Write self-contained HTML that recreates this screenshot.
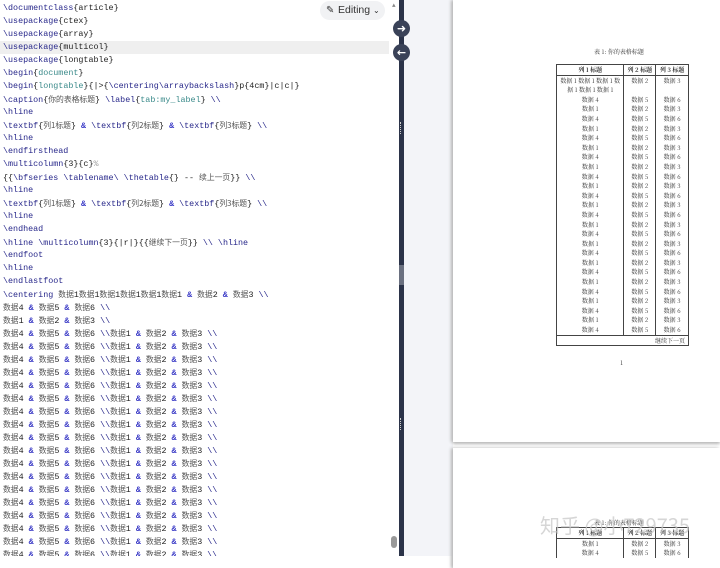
<!DOCTYPE html>
<html><head><meta charset="utf-8">
<style>
*{margin:0;padding:0;box-sizing:border-box}
body{width:720px;height:556px;overflow:hidden;background:#fff;position:relative;font-family:"Liberation Mono","Noto Sans CJK SC",monospace}
#ed{position:absolute;left:0;top:0;width:399px;height:556px;background:#fff;overflow:hidden}
.l{position:absolute;left:3px;height:13px;line-height:13px;font-size:8.4px;color:#222;white-space:pre}
.k{color:#27278a}
.e{color:#3a8a8a}
.a{color:#3333c4;font-weight:bold}
.c{font-family:"Noto Sans CJK SC",sans-serif;font-size:7.8px;color:#555}
#hl{position:absolute;left:0;top:41px;width:389px;height:13px;background:#efefef}
#btn{position:absolute;left:320px;top:1px;width:65px;height:19px;border-radius:10px;background:#f1f2f4;font-family:"Liberation Sans",sans-serif;font-size:10.5px;color:#333;line-height:19px;padding-left:18px}
#bar{position:absolute;left:399px;top:0;width:5px;height:556px;background:#2b3349}
#grey{position:absolute;left:404px;top:0;width:49px;height:556px;background:#f3f4f8}
.circ{position:absolute;left:393px;width:17px;height:17px;border-radius:50%;background:#3a4258;color:#fff;font:bold 11px "DejaVu Sans",sans-serif;text-align:center;line-height:17px}
.pg{position:absolute;left:453px;width:267px;background:#fff;box-shadow:-2px 0 3px #bbb,0 2px 3px #bbb;overflow:hidden}
table{position:absolute;border-collapse:collapse;font-family:"Noto Serif CJK SC",serif;font-size:6px;color:#333}
td{border-left:1px solid #444;border-right:1px solid #444;padding:0;text-align:center;height:9.6px;line-height:9.6px}
.cap{position:absolute;font-family:"Noto Serif CJK SC",serif;font-size:6px;color:#333}
</style></head><body>
<div id="ed">
<div id="hl"></div>
<div class="l" style="top:2px"><span class="k">\documentclass</span>{article}</div>
<div class="l" style="top:15px"><span class="k">\usepackage</span>{ctex}</div>
<div class="l" style="top:28px"><span class="k">\usepackage</span>{array}</div>
<div class="l" style="top:41px"><span class="k">\usepackage</span>{multicol}</div>
<div class="l" style="top:54px"><span class="k">\usepackage</span>{longtable}</div>
<div class="l" style="top:67px"><span class="k">\begin</span>{<span class="e">document</span>}</div>
<div class="l" style="top:80px"><span class="k">\begin</span>{<span class="e">longtable</span>}{|&gt;{<span class="k">\centering\arraybackslash</span>}p{4cm}|c|c|}</div>
<div class="l" style="top:93px"><span class="k">\caption</span>{<span class="c">你的表格标题</span>} <span class="k">\label</span>{<span class="e">tab:my_label</span>} <span class="k">\\</span></div>
<div class="l" style="top:106px"><span class="k">\hline</span></div>
<div class="l" style="top:119px"><span class="k">\textbf</span>{<span class="c">列1标题</span>} <span class="a">&amp;</span> <span class="k">\textbf</span>{<span class="c">列2标题</span>} <span class="a">&amp;</span> <span class="k">\textbf</span>{<span class="c">列3标题</span>} <span class="k">\\</span></div>
<div class="l" style="top:132px"><span class="k">\hline</span></div>
<div class="l" style="top:145px"><span class="k">\endfirsthead</span></div>
<div class="l" style="top:158px"><span class="k">\multicolumn</span>{3}{c}<span style="color:#999">%</span></div>
<div class="l" style="top:171px">{{<span class="k">\bfseries</span> <span class="k">\tablename\</span> <span class="k">\thetable</span>{} -- <span class="c">续上一页</span>}} <span class="k">\\</span></div>
<div class="l" style="top:184px"><span class="k">\hline</span></div>
<div class="l" style="top:197px"><span class="k">\textbf</span>{<span class="c">列1标题</span>} <span class="a">&amp;</span> <span class="k">\textbf</span>{<span class="c">列2标题</span>} <span class="a">&amp;</span> <span class="k">\textbf</span>{<span class="c">列3标题</span>} <span class="k">\\</span></div>
<div class="l" style="top:210px"><span class="k">\hline</span></div>
<div class="l" style="top:223px"><span class="k">\endhead</span></div>
<div class="l" style="top:236px"><span class="k">\hline</span> <span class="k">\multicolumn</span>{3}{|r|}{{<span class="c">继续下一页</span>}} <span class="k">\\</span> <span class="k">\hline</span></div>
<div class="l" style="top:249px"><span class="k">\endfoot</span></div>
<div class="l" style="top:262px"><span class="k">\hline</span></div>
<div class="l" style="top:275px"><span class="k">\endlastfoot</span></div>
<div class="l" style="top:288px"><span class="k">\centering</span> <span class="c">数据</span>1<span class="c">数据</span>1<span class="c">数据</span>1<span class="c">数据</span>1<span class="c">数据</span>1<span class="c">数据</span>1 <span class="a">&amp;</span> <span class="c">数据</span>2 <span class="a">&amp;</span> <span class="c">数据</span>3 <span class="k">\\</span></div>
<div class="l" style="top:301px"><span class="c">数据</span>4 <span class="a">&amp;</span> <span class="c">数据</span>5 <span class="a">&amp;</span> <span class="c">数据</span>6 <span class="k">\\</span></div>
<div class="l" style="top:314px"><span class="c">数据</span>1 <span class="a">&amp;</span> <span class="c">数据</span>2 <span class="a">&amp;</span> <span class="c">数据</span>3 <span class="k">\\</span></div>
<div class="l" style="top:327px"><span class="c">数据</span>4 <span class="a">&amp;</span> <span class="c">数据</span>5 <span class="a">&amp;</span> <span class="c">数据</span>6 <span class="k">\\</span><span class="c">数据</span>1 <span class="a">&amp;</span> <span class="c">数据</span>2 <span class="a">&amp;</span> <span class="c">数据</span>3 <span class="k">\\</span></div>
<div class="l" style="top:340px"><span class="c">数据</span>4 <span class="a">&amp;</span> <span class="c">数据</span>5 <span class="a">&amp;</span> <span class="c">数据</span>6 <span class="k">\\</span><span class="c">数据</span>1 <span class="a">&amp;</span> <span class="c">数据</span>2 <span class="a">&amp;</span> <span class="c">数据</span>3 <span class="k">\\</span></div>
<div class="l" style="top:353px"><span class="c">数据</span>4 <span class="a">&amp;</span> <span class="c">数据</span>5 <span class="a">&amp;</span> <span class="c">数据</span>6 <span class="k">\\</span><span class="c">数据</span>1 <span class="a">&amp;</span> <span class="c">数据</span>2 <span class="a">&amp;</span> <span class="c">数据</span>3 <span class="k">\\</span></div>
<div class="l" style="top:366px"><span class="c">数据</span>4 <span class="a">&amp;</span> <span class="c">数据</span>5 <span class="a">&amp;</span> <span class="c">数据</span>6 <span class="k">\\</span><span class="c">数据</span>1 <span class="a">&amp;</span> <span class="c">数据</span>2 <span class="a">&amp;</span> <span class="c">数据</span>3 <span class="k">\\</span></div>
<div class="l" style="top:379px"><span class="c">数据</span>4 <span class="a">&amp;</span> <span class="c">数据</span>5 <span class="a">&amp;</span> <span class="c">数据</span>6 <span class="k">\\</span><span class="c">数据</span>1 <span class="a">&amp;</span> <span class="c">数据</span>2 <span class="a">&amp;</span> <span class="c">数据</span>3 <span class="k">\\</span></div>
<div class="l" style="top:392px"><span class="c">数据</span>4 <span class="a">&amp;</span> <span class="c">数据</span>5 <span class="a">&amp;</span> <span class="c">数据</span>6 <span class="k">\\</span><span class="c">数据</span>1 <span class="a">&amp;</span> <span class="c">数据</span>2 <span class="a">&amp;</span> <span class="c">数据</span>3 <span class="k">\\</span></div>
<div class="l" style="top:405px"><span class="c">数据</span>4 <span class="a">&amp;</span> <span class="c">数据</span>5 <span class="a">&amp;</span> <span class="c">数据</span>6 <span class="k">\\</span><span class="c">数据</span>1 <span class="a">&amp;</span> <span class="c">数据</span>2 <span class="a">&amp;</span> <span class="c">数据</span>3 <span class="k">\\</span></div>
<div class="l" style="top:418px"><span class="c">数据</span>4 <span class="a">&amp;</span> <span class="c">数据</span>5 <span class="a">&amp;</span> <span class="c">数据</span>6 <span class="k">\\</span><span class="c">数据</span>1 <span class="a">&amp;</span> <span class="c">数据</span>2 <span class="a">&amp;</span> <span class="c">数据</span>3 <span class="k">\\</span></div>
<div class="l" style="top:431px"><span class="c">数据</span>4 <span class="a">&amp;</span> <span class="c">数据</span>5 <span class="a">&amp;</span> <span class="c">数据</span>6 <span class="k">\\</span><span class="c">数据</span>1 <span class="a">&amp;</span> <span class="c">数据</span>2 <span class="a">&amp;</span> <span class="c">数据</span>3 <span class="k">\\</span></div>
<div class="l" style="top:444px"><span class="c">数据</span>4 <span class="a">&amp;</span> <span class="c">数据</span>5 <span class="a">&amp;</span> <span class="c">数据</span>6 <span class="k">\\</span><span class="c">数据</span>1 <span class="a">&amp;</span> <span class="c">数据</span>2 <span class="a">&amp;</span> <span class="c">数据</span>3 <span class="k">\\</span></div>
<div class="l" style="top:457px"><span class="c">数据</span>4 <span class="a">&amp;</span> <span class="c">数据</span>5 <span class="a">&amp;</span> <span class="c">数据</span>6 <span class="k">\\</span><span class="c">数据</span>1 <span class="a">&amp;</span> <span class="c">数据</span>2 <span class="a">&amp;</span> <span class="c">数据</span>3 <span class="k">\\</span></div>
<div class="l" style="top:470px"><span class="c">数据</span>4 <span class="a">&amp;</span> <span class="c">数据</span>5 <span class="a">&amp;</span> <span class="c">数据</span>6 <span class="k">\\</span><span class="c">数据</span>1 <span class="a">&amp;</span> <span class="c">数据</span>2 <span class="a">&amp;</span> <span class="c">数据</span>3 <span class="k">\\</span></div>
<div class="l" style="top:483px"><span class="c">数据</span>4 <span class="a">&amp;</span> <span class="c">数据</span>5 <span class="a">&amp;</span> <span class="c">数据</span>6 <span class="k">\\</span><span class="c">数据</span>1 <span class="a">&amp;</span> <span class="c">数据</span>2 <span class="a">&amp;</span> <span class="c">数据</span>3 <span class="k">\\</span></div>
<div class="l" style="top:496px"><span class="c">数据</span>4 <span class="a">&amp;</span> <span class="c">数据</span>5 <span class="a">&amp;</span> <span class="c">数据</span>6 <span class="k">\\</span><span class="c">数据</span>1 <span class="a">&amp;</span> <span class="c">数据</span>2 <span class="a">&amp;</span> <span class="c">数据</span>3 <span class="k">\\</span></div>
<div class="l" style="top:509px"><span class="c">数据</span>4 <span class="a">&amp;</span> <span class="c">数据</span>5 <span class="a">&amp;</span> <span class="c">数据</span>6 <span class="k">\\</span><span class="c">数据</span>1 <span class="a">&amp;</span> <span class="c">数据</span>2 <span class="a">&amp;</span> <span class="c">数据</span>3 <span class="k">\\</span></div>
<div class="l" style="top:522px"><span class="c">数据</span>4 <span class="a">&amp;</span> <span class="c">数据</span>5 <span class="a">&amp;</span> <span class="c">数据</span>6 <span class="k">\\</span><span class="c">数据</span>1 <span class="a">&amp;</span> <span class="c">数据</span>2 <span class="a">&amp;</span> <span class="c">数据</span>3 <span class="k">\\</span></div>
<div class="l" style="top:535px"><span class="c">数据</span>4 <span class="a">&amp;</span> <span class="c">数据</span>5 <span class="a">&amp;</span> <span class="c">数据</span>6 <span class="k">\\</span><span class="c">数据</span>1 <span class="a">&amp;</span> <span class="c">数据</span>2 <span class="a">&amp;</span> <span class="c">数据</span>3 <span class="k">\\</span></div>
<div class="l" style="top:548px"><span class="c">数据</span>4 <span class="a">&amp;</span> <span class="c">数据</span>5 <span class="a">&amp;</span> <span class="c">数据</span>6 <span class="k">\\</span><span class="c">数据</span>1 <span class="a">&amp;</span> <span class="c">数据</span>2 <span class="a">&amp;</span> <span class="c">数据</span>3 <span class="k">\\</span></div>
<div id="btn"><span style="position:absolute;left:6px;top:0;font-size:10px">&#9998;</span>Editing <span style="font-size:8px">&#8964;</span></div>
<div style="position:absolute;left:391px;top:536px;width:6px;height:12px;border-radius:3px;background:#999"></div>
<div style="position:absolute;left:392px;top:2px;font-size:6px;color:#888">&#9650;</div>
</div>
<div id="grey"></div>
<div id="bar"></div>
<div class="circ" style="top:20px">&#10140;</div>
<div class="circ" style="top:44px">&#8592;</div>
<div style="position:absolute;left:400px;top:122px;width:3px;height:12px;border-left:1px dotted #ccc"></div>
<div style="position:absolute;left:400px;top:418px;width:3px;height:12px;border-left:1px dotted #ccc"></div>
<div style="position:absolute;left:399px;top:265px;width:5px;height:20px;background:#6a7080"></div>

<div class="pg" style="top:0;height:442px">
<div class="cap" style="left:141px;top:47px">表 1: 你的表格标题</div>
<div class="cap" style="left:167px;top:358px">1</div>
</div>
<table style="left:556px;top:64px;width:133px">
<colgroup><col style="width:68px"><col style="width:32px"><col style="width:33px"></colgroup>
<tr style="border-top:1px solid #444;border-bottom:1px solid #444"><td style="font-weight:bold;height:8.5px;line-height:8.5px">列 1 标题</td><td style="font-weight:bold">列 2 标题</td><td style="font-weight:bold">列 3 标题</td></tr>
<tr><td style="height:19px">数据 1 数据 1 数据 1 数<br>据 1 数据 1 数据 1</td><td style="vertical-align:top">数据 2</td><td style="vertical-align:top">数据 3</td></tr>
<tr><td>数据 4</td><td>数据 5</td><td>数据 6</td></tr><tr><td>数据 1</td><td>数据 2</td><td>数据 3</td></tr>
<tr><td>数据 4</td><td>数据 5</td><td>数据 6</td></tr><tr><td>数据 1</td><td>数据 2</td><td>数据 3</td></tr>
<tr><td>数据 4</td><td>数据 5</td><td>数据 6</td></tr><tr><td>数据 1</td><td>数据 2</td><td>数据 3</td></tr>
<tr><td>数据 4</td><td>数据 5</td><td>数据 6</td></tr><tr><td>数据 1</td><td>数据 2</td><td>数据 3</td></tr>
<tr><td>数据 4</td><td>数据 5</td><td>数据 6</td></tr><tr><td>数据 1</td><td>数据 2</td><td>数据 3</td></tr>
<tr><td>数据 4</td><td>数据 5</td><td>数据 6</td></tr><tr><td>数据 1</td><td>数据 2</td><td>数据 3</td></tr>
<tr><td>数据 4</td><td>数据 5</td><td>数据 6</td></tr><tr><td>数据 1</td><td>数据 2</td><td>数据 3</td></tr>
<tr><td>数据 4</td><td>数据 5</td><td>数据 6</td></tr><tr><td>数据 1</td><td>数据 2</td><td>数据 3</td></tr>
<tr><td>数据 4</td><td>数据 5</td><td>数据 6</td></tr><tr><td>数据 1</td><td>数据 2</td><td>数据 3</td></tr>
<tr><td>数据 4</td><td>数据 5</td><td>数据 6</td></tr><tr><td>数据 1</td><td>数据 2</td><td>数据 3</td></tr>
<tr><td>数据 4</td><td>数据 5</td><td>数据 6</td></tr><tr><td>数据 1</td><td>数据 2</td><td>数据 3</td></tr>
<tr><td>数据 4</td><td>数据 5</td><td>数据 6</td></tr><tr><td>数据 1</td><td>数据 2</td><td>数据 3</td></tr>
<tr><td>数据 4</td><td>数据 5</td><td>数据 6</td></tr>
<tr style="border-top:1px solid #444;border-bottom:1px solid #444"><td colspan="3" style="text-align:right;padding-right:3px">继续下一页</td></tr>
</table>

<div class="pg" style="top:448px;height:120px">
<div class="cap" style="left:141px;top:70px">表 1: 你的表格标题</div>
</div>
<table style="left:556px;top:527px;width:133px">
<colgroup><col style="width:68px"><col style="width:32px"><col style="width:33px"></colgroup>
<tr style="border-top:1px solid #444;border-bottom:1px solid #444"><td style="font-weight:bold;height:8.5px;line-height:8.5px">列 1 标题</td><td style="font-weight:bold">列 2 标题</td><td style="font-weight:bold">列 3 标题</td></tr>
<tr><td>数据 1</td><td>数据 2</td><td>数据 3</td></tr>
<tr><td>数据 4</td><td>数据 5</td><td>数据 6</td></tr>
</table>
<div style="position:absolute;left:540px;top:510px;font-family:'Noto Sans CJK SC',sans-serif;font-size:20px;color:rgba(200,200,200,0.75);white-space:nowrap">知乎 @小729735</div>
</body></html>
